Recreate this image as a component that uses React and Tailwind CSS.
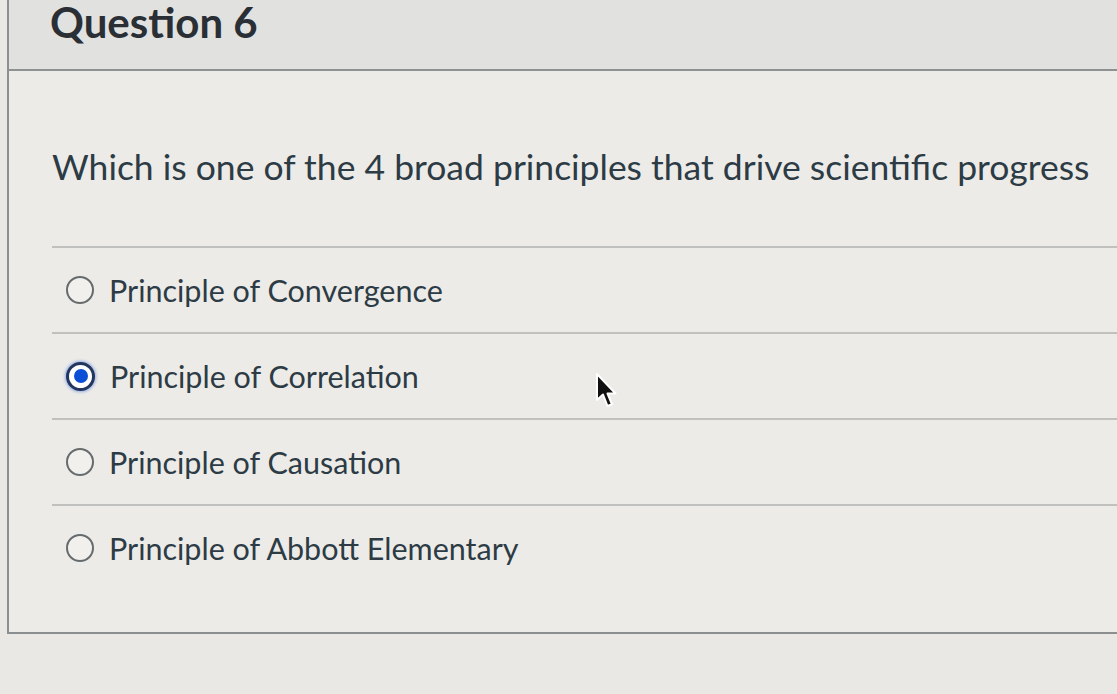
import React from "react";

const options = [
  { label: "Principle of Convergence", checked: false },
  { label: "Principle of Correlation", checked: true },
  { label: "Principle of Causation", checked: false },
  { label: "Principle of Abbott Elementary", checked: false },
];

const Radio = ({ checked }) => {
  if (checked) {
    return (
      <span className="flex items-center justify-center w-[29px] h-[29px] rounded-full border-[3px] border-[#23365e] bg-white shadow-[0_0_3px_1px_rgba(40,90,220,0.45)] shrink-0">
        <span className="w-[14px] h-[14px] rounded-full bg-[#0a4fd6]"></span>
      </span>
    );
  }
  return (
    <span className="w-[28px] h-[28px] rounded-full border-2 border-[#666b6d] bg-[#f1f0ed] shrink-0"></span>
  );
};

const Cursor = () => (
  <svg
    className="absolute left-[594px] top-[372px]"
    width="24"
    height="38"
    viewBox="0 0 24 38"
  >
    <path
      d="M3 2 L3 28 L9 22.5 L13.5 34 L18 32.3 L13.5 21.5 L21.5 21.5 Z"
      fill="#111"
      stroke="#fff"
      strokeWidth="2"
      strokeLinejoin="round"
    />
  </svg>
);

const App = () => {
  return (
    <div className="relative w-[1117px] h-[694px] overflow-hidden bg-[#e9e8e4] font-['Lato',sans-serif]">
      {/* ===== KARTU SOAL ===== */}
      <div className="ml-[7px] w-[1130px] border-l-2 border-b-2 border-[#8c8f8f] bg-[#ecebe8]">
        <div className="h-[71px] pl-[41px] bg-[#e1e1df] border-b-2 border-[#8e9191]">
          <h2 className="text-[42px] leading-[44px] font-bold text-[#2a2f35]">
            Question 6
          </h2>
        </div>

        <div className="pl-[43px] pb-[42px]">
          <div className="h-[175px] flex items-center pt-[16px]">
            <p className="text-[35.5px] leading-none text-[#2d3b45] whitespace-nowrap">
              Which is one of the 4 broad principles that drive scientific progress
            </p>
          </div>

          {options.map((opt, i) => (
            <div
              key={i}
              className="h-[86px] flex items-center gap-[15px] pl-[14px] border-t-2 border-[#c0c1bf]"
            >
              <Radio checked={opt.checked} />
              <span className="text-[30.5px] leading-none text-[#2d3b45] whitespace-nowrap">
                {opt.label}
              </span>
            </div>
          ))}
        </div>
      </div>

      <Cursor />
    </div>
  );
};

export default App;
